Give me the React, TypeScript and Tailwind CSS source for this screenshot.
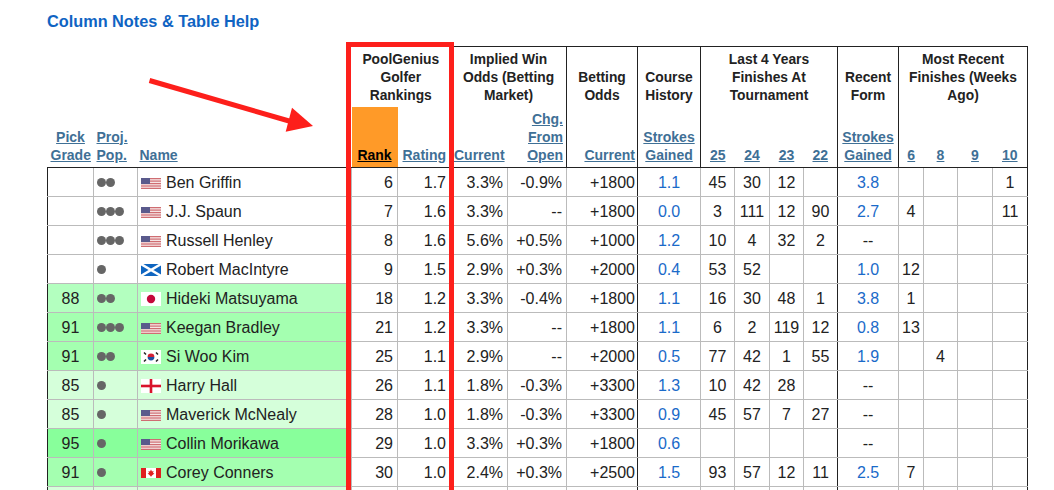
import React from "react";

const widths = [46, 44, 214, 46, 53, 57, 59, 71, 63, 34, 35, 34, 34, 61, 25, 34, 35, 35];

type Flag = "us" | "sc" | "jp" | "kr" | "en" | "ca";

function FlagIcon({ kind }: { kind: Flag }) {
  if (kind === "us") {
    return (
      <svg width="20" height="14" viewBox="0 0 20 14" className="shrink-0">
        <rect x="0" y="2" width="20" height="11" fill="#f6e4e4" />
        <rect x="0" y="2" width="20" height="1.2" fill="#cf6d72" />
        <rect x="0" y="4.5" width="20" height="1.2" fill="#cf6d72" />
        <rect x="0" y="7" width="20" height="1.2" fill="#cf6d72" />
        <rect x="0" y="9.4" width="20" height="1.2" fill="#cf6d72" />
        <rect x="0" y="11.8" width="20" height="1.2" fill="#cf6d72" />
        <rect x="0" y="2" width="9" height="6" fill="#5a5a8c" />
      </svg>
    );
  }
  if (kind === "sc") {
    return (
      <svg width="20" height="14" viewBox="0 0 20 14" className="shrink-0">
        <rect x="0" y="1" width="20" height="12" fill="#0f65c0" />
        <path d="M0 1 L20 13 M20 1 L0 13" stroke="#fff" strokeWidth="2.4" />
      </svg>
    );
  }
  if (kind === "jp") {
    return (
      <svg width="20" height="14" viewBox="0 0 20 14" className="shrink-0">
        <rect width="20" height="14" fill="#fff" />
        <circle cx="10" cy="7" r="4.2" fill="#c4083a" />
      </svg>
    );
  }
  if (kind === "kr") {
    return (
      <svg width="20" height="14" viewBox="0 0 20 14" className="shrink-0">
        <rect width="20" height="14" fill="#fff" />
        <path d="M6.6 7 A3.4 3.4 0 0 1 13.4 7 Z" fill="#d21f36" />
        <path d="M6.6 7 A3.4 3.4 0 0 0 13.4 7 Z" fill="#1c4fa3" />
        <path d="M3 2.5 L5 4.5 M15 2.5 L17 4.5 M3 11.5 L5 9.5 M15 11.5 L17 9.5" stroke="#222" strokeWidth="1.5" />
      </svg>
    );
  }
  if (kind === "en") {
    return (
      <svg width="20" height="14" viewBox="0 0 20 14" className="shrink-0">
        <rect width="20" height="14" fill="#fff" />
        <rect x="8.7" y="0" width="2.6" height="14" fill="#d9122b" />
        <rect x="0" y="5.7" width="20" height="2.6" fill="#d9122b" />
      </svg>
    );
  }
  return (
    <svg width="20" height="14" viewBox="0 0 20 14" className="shrink-0">
      <rect x="0" y="2" width="20" height="10" fill="#fff" />
      <rect x="0" y="2" width="5" height="10" fill="#e0201f" />
      <rect x="15" y="2" width="5" height="10" fill="#e0201f" />
      <path d="M10 3.6 L11 5.4 L12.6 5 L12 7 L13.4 7.6 L11 9.4 L10.3 10.6 L9.7 10.6 L9 9.4 L6.6 7.6 L8 7 L7.4 5 L9 5.4 Z" fill="#e0201f" />
    </svg>
  );
}

function Dots({ n }: { n: number }) {
  return (
    <div className="flex">
      {Array.from({ length: n }).map((_, i) => (
        <span key={i} className="block h-[9px] w-[9px] rounded-full bg-[#666]" />
      ))}
    </div>
  );
}

type Row = {
  bg: string;
  grade: string;
  dots: number;
  flag: Flag;
  name: string;
  rank: string;
  rating: string;
  cur: string;
  chg: string;
  odds: string;
  sg: string;
  years: string[];
  form: string;
  weeks: string[];
};

const rows: Row[] = [
  { bg: "bg-white", grade: "", dots: 2, flag: "us", name: "Ben Griffin", rank: "6", rating: "1.7", cur: "3.3%", chg: "-0.9%", odds: "+1800", sg: "1.1", years: ["45", "30", "12", ""], form: "3.8", weeks: ["", "", "", "1"] },
  { bg: "bg-white", grade: "", dots: 3, flag: "us", name: "J.J. Spaun", rank: "7", rating: "1.6", cur: "3.3%", chg: "--", odds: "+1800", sg: "0.0", years: ["3", "111", "12", "90"], form: "2.7", weeks: ["4", "", "", "11"] },
  { bg: "bg-white", grade: "", dots: 3, flag: "us", name: "Russell Henley", rank: "8", rating: "1.6", cur: "5.6%", chg: "+0.5%", odds: "+1000", sg: "1.2", years: ["10", "4", "32", "2"], form: "--", weeks: ["", "", "", ""] },
  { bg: "bg-white", grade: "", dots: 1, flag: "sc", name: "Robert MacIntyre", rank: "9", rating: "1.5", cur: "2.9%", chg: "+0.3%", odds: "+2000", sg: "0.4", years: ["53", "52", "", ""], form: "1.0", weeks: ["12", "", "", ""] },
  { bg: "bg-[#b3ffbf]", grade: "88", dots: 2, flag: "jp", name: "Hideki Matsuyama", rank: "18", rating: "1.2", cur: "3.3%", chg: "-0.4%", odds: "+1800", sg: "1.1", years: ["16", "30", "48", "1"], form: "3.8", weeks: ["1", "", "", ""] },
  { bg: "bg-[#a4ffb0]", grade: "91", dots: 3, flag: "us", name: "Keegan Bradley", rank: "21", rating: "1.2", cur: "3.3%", chg: "--", odds: "+1800", sg: "1.1", years: ["6", "2", "119", "12"], form: "0.8", weeks: ["13", "", "", ""] },
  { bg: "bg-[#a4ffb0]", grade: "91", dots: 2, flag: "kr", name: "Si Woo Kim", rank: "25", rating: "1.1", cur: "2.9%", chg: "--", odds: "+2000", sg: "0.5", years: ["77", "42", "1", "55"], form: "1.9", weeks: ["", "4", "", ""] },
  { bg: "bg-[#d5ffda]", grade: "85", dots: 1, flag: "en", name: "Harry Hall", rank: "26", rating: "1.1", cur: "1.8%", chg: "-0.3%", odds: "+3300", sg: "1.3", years: ["10", "42", "28", ""], form: "--", weeks: ["", "", "", ""] },
  { bg: "bg-[#d5ffda]", grade: "85", dots: 1, flag: "us", name: "Maverick McNealy", rank: "28", rating: "1.0", cur: "1.8%", chg: "-0.3%", odds: "+3300", sg: "0.9", years: ["45", "57", "7", "27"], form: "--", weeks: ["", "", "", ""] },
  { bg: "bg-[#88ff9b]", grade: "95", dots: 1, flag: "us", name: "Collin Morikawa", rank: "29", rating: "1.0", cur: "3.3%", chg: "+0.3%", odds: "+1800", sg: "0.6", years: ["", "", "", ""], form: "--", weeks: ["", "", "", ""] },
  { bg: "bg-[#a4ffb0]", grade: "91", dots: 1, flag: "ca", name: "Corey Conners", rank: "30", rating: "1.0", cur: "2.4%", chg: "+0.3%", odds: "+2500", sg: "1.5", years: ["93", "57", "12", "11"], form: "2.5", weeks: ["7", "", "", ""] },
];

const link = "text-[#3f7096] underline";
const groupTh = "border-t border-r border-t-[#222] border-r-[#222] px-[3px] pt-[4px] pb-[2px] align-bottom text-center text-[13.8px] font-bold text-[#222]";
const subTh = "border-b border-b-[#222] px-[3px] pb-[3px] align-bottom font-bold";
const subThR = "border-b border-r border-b-[#222] border-r-[#222] px-[3px] pb-[3px] align-bottom font-bold";
const td = "border border-[#bbb] h-[29px] p-0 pt-[2px] text-center";
const tdNum = "border border-[#bbb] h-[29px] p-0 pt-[2px] pr-[4px] text-right";
const tdDark = "border border-[#bbb] border-r-[#222] h-[29px] p-0 pt-[2px] text-center";

export default function App() {
  return (
    <div className="h-[490px] w-[1054px] overflow-hidden bg-white font-['Liberation_Sans',Arial,sans-serif] text-[#222]">
      <div className="relative pl-[47px] pt-[12px]">
        <a className="block h-[18px] text-[16.3px] font-bold leading-[18px] text-[#0f64c3]">Column Notes &amp; Table Help</a>
        <table className="mt-[16px] table-fixed border-collapse text-[16px] leading-[18px]" style={{ width: 980 }}>
          <colgroup>
            {widths.map((w, i) => (
              <col key={i} style={{ width: w }} />
            ))}
          </colgroup>
          <thead className="text-[14px]">
            <tr className="h-[60px]">
              <th colSpan={3} className="p-0" />
              <th colSpan={2} className={groupTh}>PoolGenius Golfer Rankings</th>
              <th colSpan={2} className={groupTh}>Implied Win Odds (Betting Market)</th>
              <th className={groupTh}>Betting Odds</th>
              <th className={groupTh}>Course History</th>
              <th colSpan={4} className={groupTh}>Last 4 Years Finishes At Tournament</th>
              <th className={groupTh}>Recent Form</th>
              <th colSpan={4} className={groupTh}>Most Recent Finishes (Weeks Ago)</th>
            </tr>
            <tr className="h-[60px]">
              <th className={subTh + " text-center"}><span className={link}>Pick Grade</span></th>
              <th className={subTh + " text-left"}><span className={link}>Proj. Pop.</span></th>
              <th className="border-b border-b-[#222] pl-[2px] pr-[3px] pb-[3px] align-bottom text-left font-bold"><span className={link}>Name</span></th>
              <th className="border-b border-b-[#222] bg-[#ff9a28] px-[3px] pb-[3px] align-bottom text-center font-bold text-black underline">Rank</th>
              <th className="border-b border-r border-b-[#222] border-r-[#222] pl-[5px] pr-[2px] pb-[3px] align-bottom text-left font-bold"><span className={link}>Rating</span></th>
              <th className="border-b border-b-[#222] px-0 pl-[3px] pb-[3px] align-bottom text-left font-bold"><span className={link}>Current</span></th>
              <th className={subThR + " text-right"}><span className={link}>Chg. From Open</span></th>
              <th className="border-b border-r border-b-[#222] border-r-[#222] pl-0 pr-[2px] pb-[3px] align-bottom text-right font-bold"><span className={link}>Current</span></th>
              <th className={subThR + " text-center"}><span className={link}>Strokes Gained</span></th>
              {["25", "24", "23"].map((y) => (
                <th key={y} className={subTh + " text-center"}><span className={link}>{y}</span></th>
              ))}
              <th className={subThR + " text-center"}><span className={link}>22</span></th>
              <th className={subThR + " text-center"}><span className={link}>Strokes Gained</span></th>
              {["6", "8", "9"].map((y) => (
                <th key={y} className={subTh + " text-center"}><span className={link}>{y}</span></th>
              ))}
              <th className={subThR + " text-center"}><span className={link}>10</span></th>
            </tr>
          </thead>
          <tbody>
            {rows.map((r) => (
              <tr key={r.name}>
                <td className={"border border-[#bbb] border-l-[#222] h-[29px] p-0 pt-[2px] text-center " + r.bg}>{r.grade}</td>
                <td className={"border border-[#bbb] h-[29px] p-0 pt-[2px] pl-[3px] " + r.bg}><Dots n={r.dots} /></td>
                <td className={"border border-[#bbb] h-[29px] p-0 pl-[3px] pt-[2px] " + r.bg}>
                  <div className="flex items-center gap-[5px]">
                    <FlagIcon kind={r.flag} />
                    <span>{r.name}</span>
                  </div>
                </td>
                <td className={tdNum}>{r.rank}</td>
                <td className={tdNum}>{r.rating}</td>
                <td className={tdNum}>{r.cur}</td>
                <td className={tdNum}>{r.chg}</td>
                <td className="border border-[#bbb] border-r-[#222] h-[29px] p-0 pt-[2px] pr-[2px] text-right">{r.odds}</td>
                <td className={td + " text-[#1a6ac9]"}>{r.sg}</td>
                {r.years.map((y, i) =>
                  i === 3 ? (
                    <td key={i} className={tdDark}>{y}</td>
                  ) : (
                    <td key={i} className={td}>{y}</td>
                  )
                )}
                <td className={td + " " + (r.form === "--" ? "" : "text-[#1a6ac9]")}>{r.form}</td>
                {r.weeks.map((y, i) =>
                  i === 3 ? (
                    <td key={i} className={tdDark}>{y}</td>
                  ) : (
                    <td key={i} className={td}>{y}</td>
                  )
                )}
              </tr>
            ))}
            <tr>
              <td className="h-[29px] border border-[#bbb] border-l-[#222] bg-[#d5ffda] p-0" />
              <td className="h-[29px] border border-[#bbb] bg-[#d5ffda] p-0" />
              <td className="h-[29px] border border-[#bbb] bg-[#d5ffda] p-0" />
              {widths.slice(3).map((_, i) => (
                <td key={i} className={i === 4 || i === 9 || i === 14 ? tdDark : td} />
              ))}
            </tr>
          </tbody>
        </table>
      </div>
      <div className="absolute left-[346px] top-[42px] h-[470px] w-[108px] border-[5px] border-[#fd1f1b]" />
      <svg className="absolute left-0 top-0" width="1054" height="490" viewBox="0 0 1054 490">
        <path d="M149.5 80.5 L296 123" stroke="#fd1f1b" strokeWidth="5" />
        <path d="M292 107.7 L313 126 L285.7 131.7 Z" fill="#fd1f1b" />
      </svg>
    </div>
  );
}
